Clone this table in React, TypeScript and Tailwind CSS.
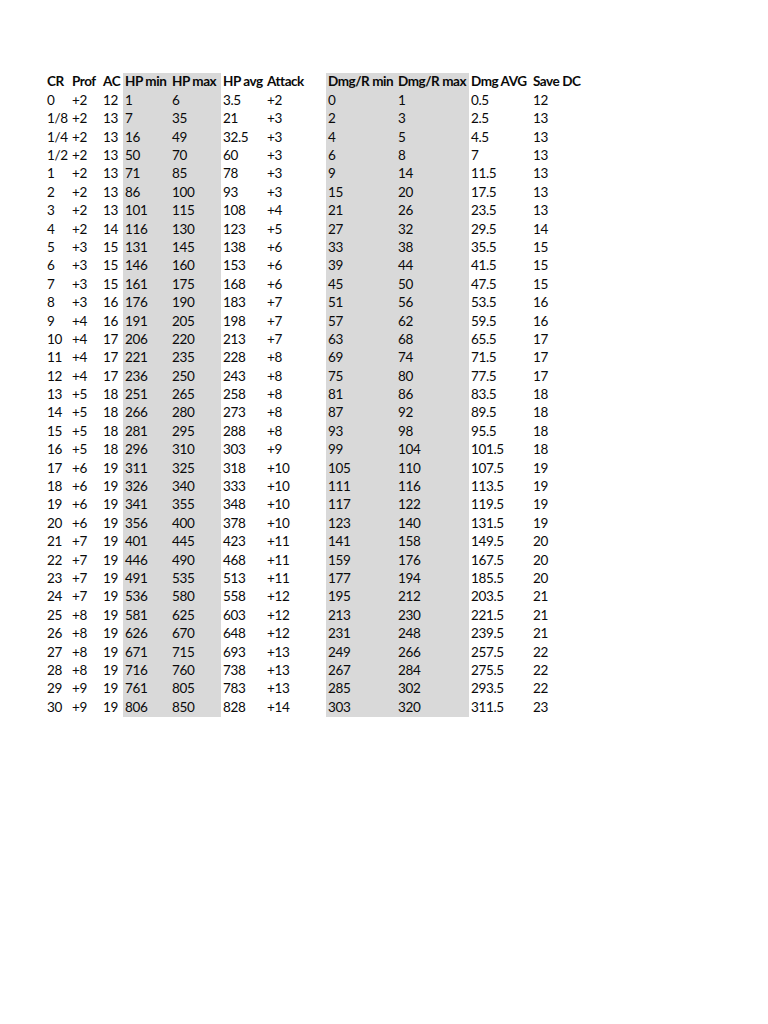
import React from "react";

// Challenge rating table
const rows: string[][] = [
  ["0", "+2", "12", "1", "6", "3.5", "+2", "0", "1", "0.5", "12"],
  ["1/8", "+2", "13", "7", "35", "21", "+3", "2", "3", "2.5", "13"],
  ["1/4", "+2", "13", "16", "49", "32.5", "+3", "4", "5", "4.5", "13"],
  ["1/2", "+2", "13", "50", "70", "60", "+3", "6", "8", "7", "13"],
  ["1", "+2", "13", "71", "85", "78", "+3", "9", "14", "11.5", "13"],
  ["2", "+2", "13", "86", "100", "93", "+3", "15", "20", "17.5", "13"],
  ["3", "+2", "13", "101", "115", "108", "+4", "21", "26", "23.5", "13"],
  ["4", "+2", "14", "116", "130", "123", "+5", "27", "32", "29.5", "14"],
  ["5", "+3", "15", "131", "145", "138", "+6", "33", "38", "35.5", "15"],
  ["6", "+3", "15", "146", "160", "153", "+6", "39", "44", "41.5", "15"],
  ["7", "+3", "15", "161", "175", "168", "+6", "45", "50", "47.5", "15"],
  ["8", "+3", "16", "176", "190", "183", "+7", "51", "56", "53.5", "16"],
  ["9", "+4", "16", "191", "205", "198", "+7", "57", "62", "59.5", "16"],
  ["10", "+4", "17", "206", "220", "213", "+7", "63", "68", "65.5", "17"],
  ["11", "+4", "17", "221", "235", "228", "+8", "69", "74", "71.5", "17"],
  ["12", "+4", "17", "236", "250", "243", "+8", "75", "80", "77.5", "17"],
  ["13", "+5", "18", "251", "265", "258", "+8", "81", "86", "83.5", "18"],
  ["14", "+5", "18", "266", "280", "273", "+8", "87", "92", "89.5", "18"],
  ["15", "+5", "18", "281", "295", "288", "+8", "93", "98", "95.5", "18"],
  ["16", "+5", "18", "296", "310", "303", "+9", "99", "104", "101.5", "18"],
  ["17", "+6", "19", "311", "325", "318", "+10", "105", "110", "107.5", "19"],
  ["18", "+6", "19", "326", "340", "333", "+10", "111", "116", "113.5", "19"],
  ["19", "+6", "19", "341", "355", "348", "+10", "117", "122", "119.5", "19"],
  ["20", "+6", "19", "356", "400", "378", "+10", "123", "140", "131.5", "19"],
  ["21", "+7", "19", "401", "445", "423", "+11", "141", "158", "149.5", "20"],
  ["22", "+7", "19", "446", "490", "468", "+11", "159", "176", "167.5", "20"],
  ["23", "+7", "19", "491", "535", "513", "+11", "177", "194", "185.5", "20"],
  ["24", "+7", "19", "536", "580", "558", "+12", "195", "212", "203.5", "21"],
  ["25", "+8", "19", "581", "625", "603", "+12", "213", "230", "221.5", "21"],
  ["26", "+8", "19", "626", "670", "648", "+12", "231", "248", "239.5", "21"],
  ["27", "+8", "19", "671", "715", "693", "+13", "249", "266", "257.5", "22"],
  ["28", "+8", "19", "716", "760", "738", "+13", "267", "284", "275.5", "22"],
  ["29", "+9", "19", "761", "805", "783", "+13", "285", "302", "293.5", "22"],
  ["30", "+9", "19", "806", "850", "828", "+14", "303", "320", "311.5", "23"],
];

const headers = ["CR", "Prof", "AC", "HP min", "HP max", "HP avg", "Attack", "Dmg/R min", "Dmg/R max", "Dmg AVG", "Save DC"];

// column widths and shading, in the sheet's order
const cols = [
  { w: "w-[25px]", shade: false },
  { w: "w-[31px]", shade: false },
  { w: "w-[22px]", shade: false },
  { w: "w-[47px]", shade: true },
  { w: "w-[51px]", shade: true },
  { w: "w-[44px]", shade: false },
  { w: "w-[61px]", shade: false },
  { w: "w-[70px]", shade: true },
  { w: "w-[73px]", shade: true },
  { w: "w-[62px]", shade: false },
  { w: "w-[70px]", shade: false },
];

function Row({ cells, bold }: { cells: string[]; bold?: boolean }) {
  return (
    <div className="flex h-[18.4px]">
      {cells.map((c, i) => (
        <div
          key={i}
          className={`${cols[i].w} ${cols[i].shade ? "bg-[#d9d9d9]" : ""} shrink-0 pl-[2px] flex items-center whitespace-nowrap ${bold ? "font-bold tracking-[-0.45px]" : "tracking-[-0.35px]"}`}
        >
          {c}
        </div>
      ))}
    </div>
  );
}

export default function App() {
  return (
    <div className="min-h-screen w-[768px] bg-white pt-[73px] pl-[45px] text-[13.5px] leading-none text-[#0a0a0a] [font-family:Lato,'Noto_Sans',sans-serif]">
      <Row cells={headers} bold />
      {rows.map((r, i) => (
        <Row key={i} cells={r} />
      ))}
    </div>
  );
}
